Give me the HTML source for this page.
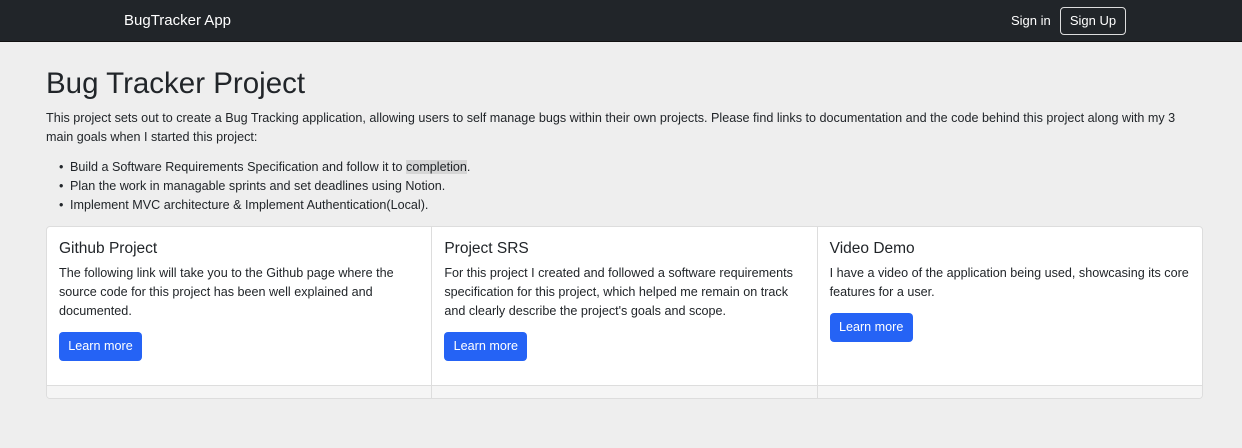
<!DOCTYPE html>
<html><head><meta charset="utf-8"><style>
*{box-sizing:border-box;margin:0;padding:0}
body{width:1242px;height:448px;background:#eeeeee;font-family:"Liberation Sans",sans-serif;color:#212529;overflow:hidden;position:relative}
.nav{position:absolute;left:0;top:0;width:1242px;height:42px;background:#212529;border-bottom:1px solid #111}
.brand{position:absolute;left:124px;top:12px;color:#fff;font-size:15px}
.signin{position:absolute;left:1011px;top:13px;color:#fff;font-size:13px}
.signup{position:absolute;left:1060px;top:7px;width:66px;height:28px;border:1px solid #ddd;border-radius:4px;color:#fff;font-size:13px;text-align:center;line-height:26px}
h1{position:absolute;left:46px;top:67px;font-size:29.5px;font-weight:400}
.p{position:absolute;left:46px;top:109px;width:1150px;font-size:12.6px;line-height:19px}
ul{position:absolute;left:70px;top:158px;font-size:12.6px;line-height:19px;list-style:none}
ul li:before{content:"•";position:absolute;left:-11px}
.hl{background:#d6d6d6}
.cards{position:absolute;left:46px;top:226px;width:1157px;height:173px;background:#fff;border:1px solid #ddd;border-radius:4px;overflow:hidden;display:flex}
.card{flex:1;position:relative;border-right:1px solid #ddd}
.card:last-child{border-right:none}
.card h5{position:absolute;left:12px;top:13px;font-size:15.5px;font-weight:400}
.card p{position:absolute;left:12px;top:37px;width:365px;font-size:12.6px;line-height:19px}
.btn{position:absolute;left:12px;width:83px;height:29px;background:#2563f5;color:#fff;border-radius:4px;font-size:12.6px;text-align:center;line-height:29px}
.foot{position:absolute;left:0;right:0;bottom:0;height:13px;background:#f5f5f5;border-top:1px solid #ddd}
</style></head><body>
<div class="nav"><div class="brand">BugTracker App</div><div class="signin">Sign in</div><div class="signup">Sign Up</div></div>
<h1>Bug Tracker Project</h1>
<div class="p">This project sets out to create a Bug Tracking application, allowing users to self manage bugs within their own projects. Please find links to documentation and the code behind this project along with my 3 main goals when I started this project:</div>
<ul><li>Build a Software Requirements Specification and follow it to <span class="hl">completion</span>.</li><li>Plan the work in managable sprints and set deadlines using Notion.</li><li>Implement MVC architecture &amp; Implement Authentication(Local).</li></ul>
<div class="cards">
<div class="card"><h5>Github Project</h5><p>The following link will take you to the Github page where the source code for this project has been well explained and documented.</p><div class="btn" style="top:105px">Learn more</div><div class="foot"></div></div>
<div class="card"><h5>Project SRS</h5><p>For this project I created and followed a software requirements specification for this project, which helped me remain on track and clearly describe the project's goals and scope.</p><div class="btn" style="top:105px">Learn more</div><div class="foot"></div></div>
<div class="card"><h5>Video Demo</h5><p>I have a video of the application being used, showcasing its core features for a user.</p><div class="btn" style="top:86px">Learn more</div><div class="foot"></div></div>
</div>
</body></html>
